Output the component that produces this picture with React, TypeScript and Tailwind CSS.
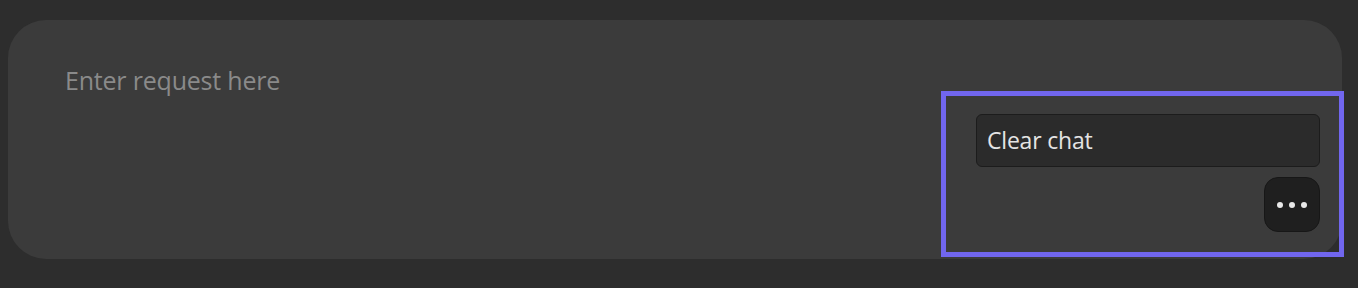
import React from "react";

export default function App() {
  return (
    <div className="w-[1358px] h-[288px] bg-[#2d2d2d] pt-[20px] pl-[8px] pr-[16px]" style={{ fontFamily: '"Open Sans", "Noto Sans", sans-serif' }}>
      <div className="relative h-[239px] rounded-[38px] bg-[#3b3b3b]">
        <div className="pl-[57px] pt-[44px] text-[25px] leading-[32px] text-[#8a8a8a] tracking-[-0.2px]">
          Enter request here
        </div>
        <div className="absolute left-[933px] top-[71px] right-[-2px] bottom-[2px] border-[5px] border-[#7166ee] flex flex-col items-end pt-[18px] pr-[19px]">
          <div className="w-[344px] h-[53px] rounded-[6px] bg-[#2b2b2b] border-[1.5px] border-[#1c1c1c] flex items-center pl-[10px] text-[23px] text-[#e4e4e4] tracking-[-0.2px]">
            Clear chat
          </div>
          <button className="mt-[10px] w-[56px] h-[55px] rounded-[14px] bg-[#1f1f1f] border border-[#171717] flex items-center justify-center gap-[6px]">
            <span className="w-[6px] h-[6px] rounded-full bg-[#e8e8e8]" />
            <span className="w-[6px] h-[6px] rounded-full bg-[#e8e8e8]" />
            <span className="w-[6px] h-[6px] rounded-full bg-[#e8e8e8]" />
          </button>
        </div>
      </div>
    </div>
  );
}
